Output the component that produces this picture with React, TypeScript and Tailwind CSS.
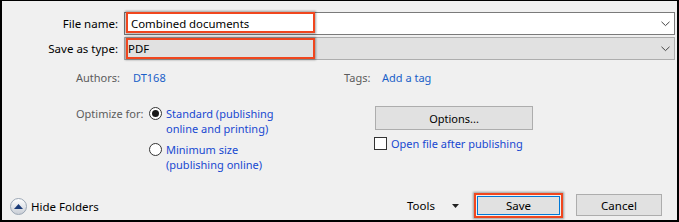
import React from "react";

const font = { fontFamily: '"Noto Sans", "Open Sans", sans-serif' };

function Chevron() {
  return (
    <svg width="9" height="6" viewBox="0 0 9 6" className="shrink-0">
      <path d="M0.5 0.8 L4.5 4.6 L8.5 0.8" fill="none" stroke="#444" strokeWidth="1" />
    </svg>
  );
}

function Radio({ checked }: { checked?: boolean }) {
  return (
    <div className="w-[13px] h-[13px] rounded-full border border-[#333] bg-white flex items-center justify-center shrink-0">
      {checked && <div className="w-[7px] h-[7px] rounded-full bg-[#1a1a1a]" />}
    </div>
  );
}

export default function App() {
  return (
    <div
      className="w-[679px] h-[222px] bg-[#f0f0f0] border-l-2 border-r-2 border-t border-b-2 border-black flex flex-col text-[11px] leading-[15px] text-black overflow-hidden whitespace-nowrap"
      style={font}
    >
      {/* File name */}
      <div className="flex items-center mt-[11px] pr-[2px]">
        <div className="w-[116px] text-right text-[11.5px]">File name:</div>
        <div className="ml-[6px] relative flex-1 h-[23px] bg-white border border-[#7a7a7a] flex items-center pl-[6px] pr-[4px]">
          <span className="flex-1 text-[11.4px]">Combined documents</span>
          <Chevron />
          <div className="absolute left-[1px] top-[-1px] w-[189px] h-[21px] border-2 border-[#f0461e] shadow-[0_0_2px_1px_rgba(0,0,0,0.35)] pointer-events-none" />
        </div>
      </div>
      {/* Save as type */}
      <div className="flex items-center mt-[2px] pr-[2px]">
        <div className="w-[116px] text-right text-[11.5px]">Save as type:</div>
        <div className="ml-[6px] relative flex-1 h-[23px] bg-[#e1e1e1] border border-[#adadad] flex items-center pl-[3px] pr-[4px]">
          <span className="flex-1 text-[11.4px]">PDF</span>
          <Chevron />
          <div className="absolute left-[1px] top-[0px] w-[189px] h-[21px] border-2 border-[#f0461e] shadow-[0_0_2px_1px_rgba(0,0,0,0.35)] pointer-events-none" />
        </div>
      </div>

      {/* Authors / Tags */}
      <div className="flex items-center mt-[9px] pl-[74px] h-[16px]">
        <div className="w-[268px] flex">
          <span className="text-[#5c5c5c] w-[57px]">Authors:</span>
          <span className="text-[#1a5fc8]">DT168</span>
        </div>
        <div className="flex">
          <span className="text-[#5c5c5c] w-[38px]">Tags:</span>
          <span className="text-[#1a5fc8]">Add a tag</span>
        </div>
      </div>

      {/* Optimize section */}
      <div className="flex mt-[21px] pl-[74px]">
        <div className="w-[298px] flex">
          <span className="text-[#5c5c5c] w-[73px]">Optimize for:</span>
          <div className="flex flex-col">
            <div className="flex">
              <div className="h-[15px] flex items-center"><Radio checked /></div>
              <div className="ml-[4px] text-[#1748d0]">
                Standard (publishing
                <br />
                online and printing)
              </div>
            </div>
            <div className="flex mt-[6px]">
              <div className="h-[15px] flex items-center"><Radio /></div>
              <div className="ml-[4px] text-[#1748d0]">
                Minimum size
                <br />
                (publishing online)
              </div>
            </div>
          </div>
        </div>
        <div className="flex flex-col">
          <div className="w-[158px] h-[24px] bg-[#e1e1e1] border border-[#adadad] flex items-center justify-center ml-[1px]">
            Options...
          </div>
          <div className="flex items-center mt-[6px] h-[15px]">
            <div className="w-[13px] h-[13px] border border-[#333] bg-white shrink-0" />
            <span className="ml-[4px] text-[#1748d0]">Open file after publishing</span>
          </div>
        </div>
      </div>

      {/* Bottom */}
      <div className="mt-auto flex items-center h-[30px] pr-[15px]">
        <div className="ml-[8px] w-[17px] h-[17px] rounded-full border border-[#9aa6b4] bg-gradient-to-b from-white to-[#c9ced6] flex items-center justify-center mt-[2px]">
          <svg width="9" height="5" viewBox="0 0 9 5">
            <path d="M0 5 L4.5 0 L9 5 Z" fill="#1b3b78" />
          </svg>
        </div>
        <span className="ml-[4px] mt-[2px] text-[11.5px]">Hide Folders</span>
        <div className="flex-1" />
        <span className="text-[11.5px]">Tools</span>
        <svg width="7" height="4" viewBox="0 0 7 4" className="ml-[17px] mt-[1px]">
          <path d="M0 0 L7 0 L3.5 4 Z" fill="#222" />
        </svg>
        <div className="ml-[15px] w-[89px] h-[25px] border-2 border-[#f0461e] shadow-[0_0_2px_1px_rgba(0,0,0,0.35)] flex">
          <div className="flex-1 m-[1px] border border-[#0078d7] bg-[#e1e1e1] flex items-center justify-center text-[11.5px]">
            Save
          </div>
        </div>
        <div className="ml-[13px] w-[86px] h-[22px] bg-[#e1e1e1] border border-[#adadad] flex items-center justify-center text-[11.5px]">
          Cancel
        </div>
      </div>
    </div>
  );
}
